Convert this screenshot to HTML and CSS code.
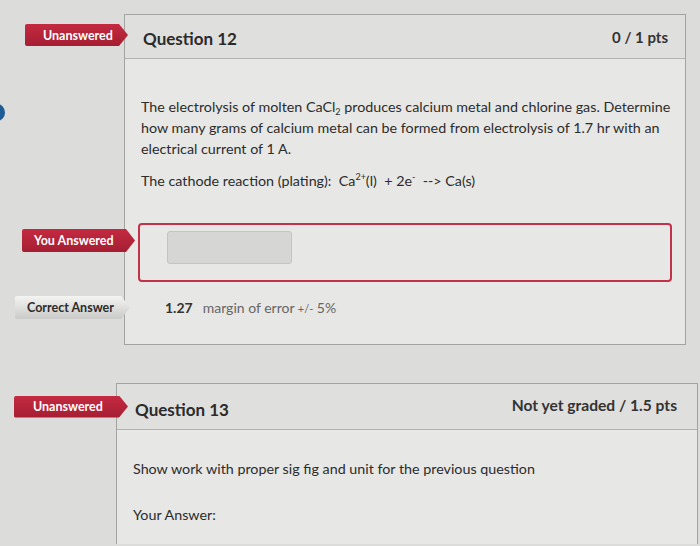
FILE: index.html
```html
<!DOCTYPE html>
<html lang="en">
<head>
<meta charset="utf-8">
<title>Quiz</title>
<link rel="stylesheet" href="styles.css">
</head>
<body>
<div class="nav-dot"></div>

<div class="question q12">
  <div class="q-header">
    <div class="badge badge-red badge-head">Unanswered</div>
    <h2 class="q-title">Question 12</h2>
    <div class="q-pts">0 / 1 pts</div>
  </div>
  <div class="q-body">
    <p class="q-text">The electrolysis of molten CaCl<span class="sub">2</span> produces calcium metal and chlorine gas. Determine how many grams of calcium metal can be formed from electrolysis of 1.7 hr with an electrical current of 1 A.</p>
    <p class="q-text q-text2">The cathode reaction (plating):&nbsp; Ca<span class="sup">2+</span>(l)&nbsp; + 2e<span class="sup">-</span>&nbsp; --&gt; Ca(s)</p>

    <div class="answer-row">
      <div class="badge badge-red badge-you">You Answered</div>
      <div class="answer-box">
        <div class="answer-input"></div>
      </div>
    </div>

    <div class="correct-row">
      <div class="badge badge-gray badge-correct">Correct Answer</div>
      <span class="correct-val">1.27</span>
      <span class="correct-margin">margin of error <small>+/-</small> 5%</span>
    </div>
  </div>
</div>

<div class="question q13">
  <div class="q-header q13-header">
    <div class="badge badge-red badge-head13">Unanswered</div>
    <h2 class="q-title q13-title">Question 13</h2>
    <div class="q-pts q13-pts">Not yet graded / 1.5 pts</div>
  </div>
  <div class="q-body q13-body">
    <p class="q-text">Show work with proper sig fig and unit for the previous question</p>
    <p class="q-text your-answer">Your Answer:</p>
  </div>
</div>
</body>
</html>
```

FILE: styles.css
```css
html, body {
  margin: 0;
  padding: 0;
}
html {
  overflow: hidden;
}
body {
  background: #dcdcda;
  font-family: Lato, "Open Sans", sans-serif;
  color: #2d3b45;
  position: relative;
  width: 700px;
  height: 546px;
  overflow: hidden;
}
.nav-dot {
  position: absolute;
  left: -11px;
  top: 104px;
  width: 16px;
  height: 17px;
  border-radius: 50%;
  background: #1d5c96;
}
.question {
  background: #e7e7e5;
  border: 1px solid #a3a3a1;
}
.q12 {
  margin: 14px 0 0 124px;
  width: 560px;
}
.q13 {
  margin: 38px 0 0 116px;
  width: 580px;
  height: 160px;
  border-bottom: none;
}
.q-header {
  display: flex;
  align-items: center;
  height: 43px;
  background: #dfdfdd;
  border-bottom: 1px solid #b2b2b0;
  padding-right: 17px;
}
.q13-header {
  height: 45px;
  padding-right: 20px;
}
.q-title {
  margin: 0 0 0 15px;
  font-size: 17px;
  font-weight: 700;
  color: #2b2b2b;
  padding-top: 4px;
}
.q13-title {
  margin-left: 7px;
  padding-top: 6px;
}
.q-pts {
  margin-left: auto;
  font-size: 15px;
  font-weight: 700;
  color: #333;
}
.q13-pts {
  font-size: 15.6px;
  padding-bottom: 4px;
}
.badge {
  flex: none;
  display: flex;
  align-items: center;
  height: 22px;
  box-sizing: border-box;
  font-size: 12.5px;
  font-weight: 700;
  clip-path: polygon(0 0, calc(100% - 9px) 0, 100% 50%, calc(100% - 9px) 100%, 0 100%);
}
.badge-red {
  background: linear-gradient(#c42a40, #a51e33);
  color: #fff;
  border-radius: 2px 0 0 2px;
}
.badge-gray {
  background: linear-gradient(#f4f4f2, #cacac8);
  color: #2b2b2b;
  border-radius: 2px 0 0 2px;
}
.badge-head {
  margin-left: -100px;
  width: 103px;
  padding-left: 18px;
  margin-bottom: 3px;
}
.badge-head13 {
  margin-left: -103px;
  width: 114px;
  padding-left: 19px;
}
.q-body {
  padding: 37px 8px 25px 16px;
}
.q13-body {
  padding-top: 28px;
}
.q-text {
  margin: 0;
  font-size: 14.3px;
  line-height: 21px;
  color: #2c2c2c;
}
.sub, .sup {
  font-size: 9px;
  display: inline-block;
  line-height: 9px;
}
.sub {
  vertical-align: -3px;
}
.sup {
  vertical-align: 6px;
}
.q-text2 {
  margin-top: 11px;
}
.your-answer {
  margin-top: 25px;
}
.answer-row {
  display: flex;
  align-items: flex-start;
  margin-top: 32px;
}
.badge-you {
  margin-left: -119px;
  margin-top: 6px;
  width: 113px;
  height: 23px;
  padding-left: 12px;
}
.answer-box {
  margin-left: 3px;
  width: 534px;
  box-sizing: border-box;
  border: 2px solid #c3324b;
  border-radius: 4px;
  padding: 6px 0 16px 27px;
}
.answer-input {
  width: 125px;
  height: 33px;
  box-sizing: border-box;
  background: #d6d6d4;
  border: 1px solid #c4c4c2;
  border-radius: 3px;
}
.correct-row {
  display: flex;
  align-items: center;
  margin-top: 14px;
  font-size: 14px;
}
.badge-correct {
  margin-left: -126px;
  width: 115px;
  height: 23px;
  padding-left: 12px;
  font-size: 12.5px;
}
.correct-val {
  margin-left: 35px;
  font-weight: 700;
  color: #333;
}
.correct-margin {
  margin-left: 10px;
  color: #666;
}
.correct-margin small {
  font-size: 11px;
}
```
